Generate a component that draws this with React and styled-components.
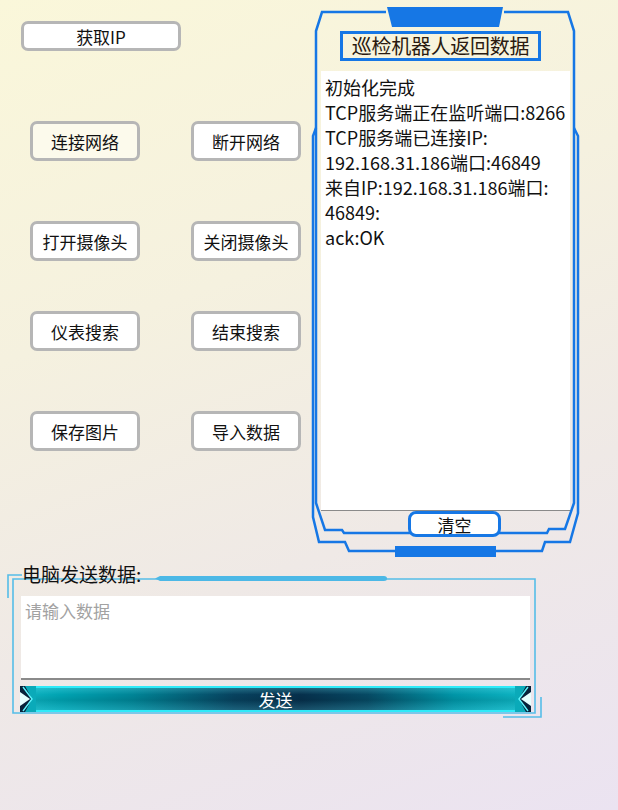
import React from "react";
import styled, { createGlobalStyle } from "styled-components";

const GlobalStyle = createGlobalStyle`
  html, body { margin: 0; padding: 0; }
  body {
    font-family: "Noto Sans CJK SC", "Noto Sans", sans-serif;
    background: #f3efe4;
  }
  * { box-sizing: border-box; }
`;

const Page = styled.div`
  width: 618px;
  min-height: 810px;
  background: linear-gradient(160deg, #faf7da 0%, #f5f1df 35%, #efe9e6 65%, #ebe3f1 100%);
  overflow: hidden;
`;

const Top = styled.div`
  display: flex;
  height: 560px;
`;

const Controls = styled.div`
  width: 310px;
  padding: 21px 0 0 21px;
`;

const IpButton = styled.button`
  display: flex;
  align-items: center;
  justify-content: center;
  width: 160px;
  height: 30px;
  border: 3px solid #b6b6b6;
  border-radius: 7px;
  background: #fff;
  color: #111;
  font-family: inherit;
  font-size: 17px;
  padding: 0;
`;

const ButtonRow = styled.div`
  display: flex;
  gap: 51px;
  padding-left: 9px;
  margin-top: ${(p) => p.$top}px;
`;

const CtrlButton = styled.button`
  display: flex;
  align-items: center;
  justify-content: center;
  width: 110px;
  height: 40px;
  border: 3px solid #b6b6b6;
  border-radius: 7px;
  background: ${(p) => (p.$cream ? "#fcfaec" : "#fff")};
  color: #111;
  font-family: inherit;
  font-size: 17px;
  padding: 0;
`;

const Panel = styled.div`
  position: relative;
  width: 272px;
  height: 560px;
  padding-top: 31px;
  & > *:not(svg) { position: relative; z-index: 1; }
`;

const FrameSvg = styled.svg`
  position: absolute;
  left: 0;
  top: 0;
  pointer-events: none;
`;

const Title = styled.div`
  display: flex;
  align-items: center;
  justify-content: center;
  margin-left: 30px;
  width: 201px;
  height: 30px;
  border: 3px solid #1677e5;
  color: #2a1a10;
  font-size: 20px;
  letter-spacing: -0.3px;
  line-height: 1;
`;

const Log = styled.div`
  margin: 10px 0 0 11px;
  width: 249px;
  height: 440px;
  background: #fff;
  border-bottom: 1px solid #8a8a8a;
  padding: 4px 0 0 4px;
  font-size: 18px;
  line-height: 25px;
  color: #111;
  white-space: pre;
  overflow: hidden;
`;

const ClearButton = styled.button`
  display: flex;
  align-items: center;
  justify-content: center;
  margin-left: 98px;
  width: 93px;
  height: 26px;
  border: 3px solid #1677e5;
  border-radius: 8px;
  background: #fff;
  color: #111;
  font-family: inherit;
  font-size: 17px;
  padding: 0;
`;

const SendSection = styled.div`
  position: relative;
  height: 160px;
  & > *:not(svg) { position: relative; z-index: 1; }
`;

const SendLabel = styled.div`
  margin-left: 22px;
  padding-top: 2px;
  font-size: 19px;
  line-height: 24px;
  color: #111;
`;

const Input = styled.textarea`
  display: block;
  margin: 10px 0 0 21px;
  width: 509px;
  height: 84px;
  border: none;
  border-bottom: 2px solid #8a8a8a;
  background: #fff;
  padding: 4px 4px;
  resize: none;
  font-family: inherit;
  font-size: 17px;
  line-height: 22px;
  color: #111;
  outline: none;
  &::placeholder { color: #a2a2a2; }
`;

const SendButton = styled.button`
  position: relative;
  display: flex;
  align-items: center;
  justify-content: center;
  margin: 6px 0 0 20px;
  width: 511px;
  height: 26px;
  border: none;
  border-top: 2px solid #30eaf8;
  border-bottom: 2px solid #30eaf8;
  padding: 0;
  color: #fff;
  font-family: inherit;
  font-size: 17px;
  background:
    linear-gradient(180deg, rgba(120, 240, 255, 0.25) 0%, rgba(0, 0, 0, 0) 30%, rgba(0, 0, 0, 0.08) 55%, rgba(120, 240, 255, 0.18) 100%),
    linear-gradient(90deg, #10b4c2 0%, #00a3b2 8%, #008597 22%, #07425f 42%, #06304c 55%, #064a64 68%, #0096a8 85%, #0fb8c6 100%);
`;

const Cap = styled.svg`
  position: absolute;
  top: -2px;
  ${(p) => (p.$side === "left" ? "left: 0;" : "right: 0;")}
`;

const BtnText = styled.span`
  position: relative;
  z-index: 1;
`;

function PanelFrame() {
  const c = "#1677e5";
  return (
    <FrameSvg width="272" height="560" viewBox="310 0 272 560">
      <g fill="none" stroke={c} strokeWidth="2.5" strokeLinejoin="miter">
        <path d="M386 12 H322 L316 31 V503 L325 530 H342 L344 533 H410" />
        <path d="M316 128 L313 136 V517 L319 542 H345 L349 551 H396" />
        <path d="M504 12 H568 L574 31 V128 V503 L565 529 H549 L547 533 H499" />
        <path d="M574 128 L578 136 V513 L570 542 H545 L542 551 H495" />
      </g>
      <polygon points="387,7 503,7 499,27 392,27" fill={c} />
      <rect x="395" y="546" width="101" height="11" fill={c} />
    </FrameSvg>
  );
}

function SendFrame() {
  const c = "#55bde8";
  return (
    <FrameSvg width="618" height="160" viewBox="0 560 618 160">
      <g fill="none" stroke={c} strokeWidth="1.6">
        <path d="M8 598 V575 H22" />
        <path d="M13 713 V579 H535 V713 Z" />
        <path d="M503 717 H541 V697" />
      </g>
      <path d="M160 576 H384 Q387 576 387 578.5 Q387 581 384 581 H160 L155 578.5 Z" fill="#4cb8e6" />
    </FrameSvg>
  );
}

function ButtonCap({ side }) {
  const flip = side === "right" ? "translate(16,0) scale(-1,1)" : undefined;
  return (
    <Cap $side={side} width="16" height="26" viewBox="0 0 16 26">
      <g transform={flip}>
        <rect x="0" y="0" width="16" height="26" fill="#07223a" />
        <polygon points="16,0 5,0 12,13 5,26 16,26" fill="#0aaab9" />
        <polyline points="3,1 12,13 3,25" fill="none" stroke="#5ff6ff" strokeWidth="1.4" />
        <polygon points="0,6 0,20 10,13" fill="#e6ffff" />
      </g>
    </Cap>
  );
}

const rows = [
  { top: 70, items: [{ t: "连接网络", cream: true }, { t: "断开网络" }] },
  { top: 60, items: [{ t: "打开摄像头" }, { t: "关闭摄像头" }] },
  { top: 50, items: [{ t: "仪表搜索" }, { t: "结束搜索" }] },
  { top: 60, items: [{ t: "保存图片" }, { t: "导入数据" }] },
];

const logText = [
  "初始化完成",
  "TCP服务端正在监听端口:8266",
  "TCP服务端已连接IP:",
  "192.168.31.186端口:46849",
  "来自IP:192.168.31.186端口:",
  "46849:",
  "ack:OK",
].join("\n");

export default function App() {
  return (
    <Page>
      <GlobalStyle />
      <Top>
        <Controls>
          <IpButton>获取IP</IpButton>
          {rows.map((r, i) => (
            <ButtonRow key={i} $top={r.top}>
              {r.items.map((b) => (
                <CtrlButton key={b.t} $cream={b.cream}>
                  {b.t}
                </CtrlButton>
              ))}
            </ButtonRow>
          ))}
        </Controls>
        <Panel>
          <PanelFrame />
          <Title>巡检机器人返回数据</Title>
          <Log>{logText}</Log>
          <ClearButton>清空</ClearButton>
        </Panel>
      </Top>
      <SendSection>
        <SendFrame />
        <SendLabel>电脑发送数据:</SendLabel>
        <Input placeholder="请输入数据" />
        <SendButton>
          <ButtonCap side="left" />
          <ButtonCap side="right" />
          <BtnText>发送</BtnText>
        </SendButton>
      </SendSection>
    </Page>
  );
}
